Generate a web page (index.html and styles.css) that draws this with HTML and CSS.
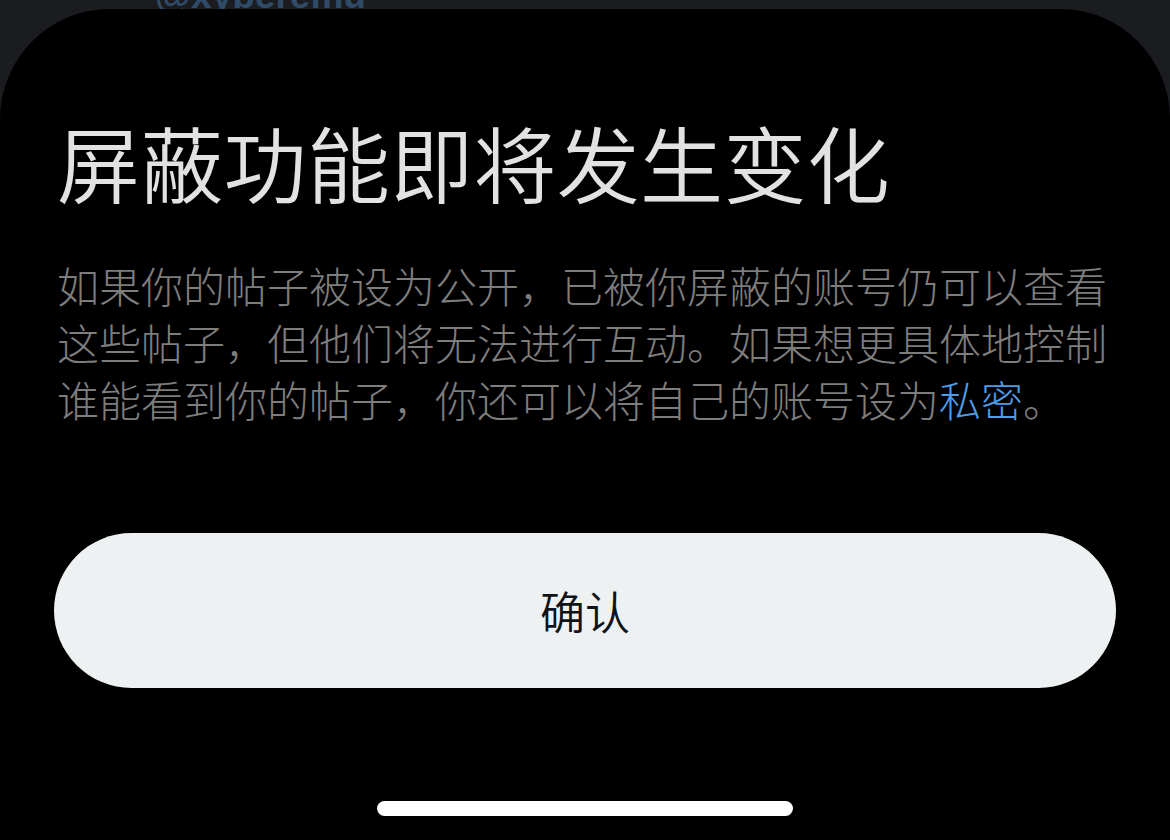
FILE: index.html
```html
<!DOCTYPE html>
<html lang="zh-CN">
<head>
<meta charset="utf-8">
<title>屏蔽功能即将发生变化</title>
<link rel="stylesheet" href="styles.css">
</head>
<body>
<div class="strip"><span class="handle">@xyberemu</span></div>
<div class="sheet">
  <h1 class="title">屏蔽功能即将发生变化</h1>
  <p class="desc">如果你的帖子被设为公开，已被你屏蔽的账号仍可以查看这些帖子，但他们将无法进行互动。如果想更具体地控制谁能看到你的帖子，你还可以将自己的账号设为<a class="link" href="#">私密</a>。</p>
  <button class="confirm">确认</button>
  <div class="home-bar"></div>
</div>
</body>
</html>
```

FILE: styles.css
```css
html, body {
  margin: 0;
  padding: 0;
}
body {
  width: 1170px;
  height: 840px;
  background: #1a1c20;
  overflow: hidden;
  font-family: "Noto Sans CJK SC", "Noto Sans", sans-serif;
}
.strip {
  height: 9px;
  overflow: hidden;
  padding-left: 155px;
}
.handle {
  display: block;
  margin-top: -24px;
  font-family: "Liberation Sans", Arial, sans-serif;
  font-weight: bold;
  font-size: 37px;
  line-height: 40px;
  color: #2f4b68;
}
.sheet {
  height: 831px;
  box-sizing: border-box;
  background: #000;
  border-radius: 110px 110px 0 0;
  padding: 102px 54px 0 54px;
  display: flex;
  flex-direction: column;
}
.title {
  margin: 0 0 0 3px;
  font-size: 83px;
  font-weight: 350;
  line-height: 100px;
  color: #e2e2e2;
  letter-spacing: 0.3px;
}
.desc {
  margin: 45px 0 0 3px;
  width: 1060px;
  font-size: 42px;
  font-weight: 300;
  line-height: 57px;
  color: #7d7d7d;
}
.link {
  color: #4f9be6;
  text-decoration: none;
}
.confirm {
  margin-top: 106px;
  height: 155px;
  width: 1062px;
  border: none;
  border-radius: 78px;
  background: #eef1f2;
  color: #0f1419;
  font-family: "Noto Sans CJK SC", sans-serif;
  font-size: 45px;
  font-weight: 350;
  padding: 0;
}
.home-bar {
  align-self: center;
  margin-top: 113px;
  margin-left: -1px;
  width: 416px;
  height: 15px;
  border-radius: 8px;
  background: #fff;
}
```
